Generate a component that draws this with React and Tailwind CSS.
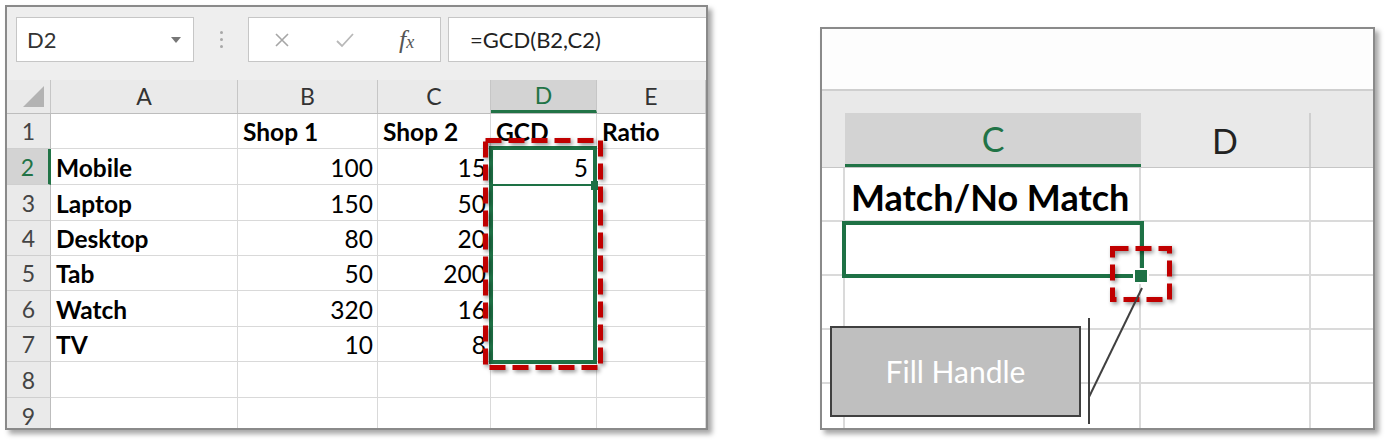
import React from 'react';

const leftCols = [
  { key: 'A', w: 'w-[187px]' },
  { key: 'B', w: 'w-[140px]' },
  { key: 'C', w: 'w-[113px]' },
  { key: 'D', w: 'w-[106px]' },
  { key: 'E', w: 'flex-1' },
];

const rowHeights = ['h-[35px]', 'h-[36px]', 'h-[36px]', 'h-[35px]', 'h-[35px]', 'h-[36px]', 'h-[35px]', 'h-[36px]', 'h-[36px]'];

const data = [
  ['', 'Shop 1', 'Shop 2', 'GCD', 'Ratio'],
  ['Mobile', '100', '15', '5', ''],
  ['Laptop', '150', '50', '', ''],
  ['Desktop', '80', '20', '', ''],
  ['Tab', '50', '200', '', ''],
  ['Watch', '320', '16', '', ''],
  ['TV', '10', '8', '', ''],
  ['', '', '', '', ''],
  ['', '', '', '', ''],
];

function DashedBox({ w, h, className }) {
  return (
    <svg
      width={w}
      height={h}
      className={'absolute drop-shadow-[2px_2px_2px_rgba(0,0,0,0.45)] ' + className}
    >
      <rect x="2.5" y="2.5" width={w - 5} height={h - 5} fill="none" stroke="#c00000" strokeWidth="5" strokeDasharray="16 7" />
    </svg>
  );
}

function Toolbar() {
  return (
    <div className="h-[73px] bg-[#eeeeee] flex items-start pt-[10px] pl-[9px]">
      <div className="w-[178px] h-[45px] bg-white border border-[#c6c6c6] flex items-center justify-between pl-[10px] pr-[12px]">
        <span className="text-[22px] text-[#333]">D2</span>
        <svg width="10" height="6" viewBox="0 0 10 6">
          <polygon points="0,0 10,0 5,6" fill="#777" />
        </svg>
      </div>
      <div className="w-[54px] h-[45px] flex flex-col items-center justify-center gap-[4px]">
        <div className="w-[3px] h-[3px] rounded-full bg-[#a8a8a8]" />
        <div className="w-[3px] h-[3px] rounded-full bg-[#a8a8a8]" />
        <div className="w-[3px] h-[3px] rounded-full bg-[#a8a8a8]" />
      </div>
      <div className="w-[193px] h-[45px] bg-white border border-[#c6c6c6] flex items-center">
        <div className="w-[68px] flex justify-center">
          <svg width="16" height="16" viewBox="0 0 16 16">
            <path d="M2 2 L14 14 M14 2 L2 14" stroke="#a6a6a6" strokeWidth="1.6" />
          </svg>
        </div>
        <div className="w-[58px] flex justify-center">
          <svg width="20" height="16" viewBox="0 0 20 16">
            <path d="M2 9 L7 14 L18 2" stroke="#b8b8b8" strokeWidth="1.8" fill="none" />
          </svg>
        </div>
        <div className="w-[68px] flex justify-center">
          <span className="font-['Liberation_Serif',serif] italic text-[26px] text-[#555] leading-none">
            f<span className="text-[18px]">x</span>
          </span>
        </div>
      </div>
      <div className="flex-1 h-[45px] ml-[7px] bg-white border border-r-0 border-[#c6c6c6] flex items-center pl-[21px]">
        <span className="text-[22px] text-[#222]">=GCD(B2,C2)</span>
      </div>
    </div>
  );
}

function LeftSheet() {
  return (
    <div className="relative w-[703px] h-[425px] border-2 border-[#8a8a8a] bg-white shadow-[4px_4px_5px_rgba(0,0,0,0.35)] overflow-hidden">
      <Toolbar />
      <div className="h-[34px] flex bg-[#eaeaea] border-b border-[#bdbdbd]">
        <div className="w-[44px] border-r border-[#c6c6c6] flex items-end justify-end pr-[6px] pb-[6px]">
          <svg width="21" height="21" viewBox="0 0 21 21">
            <polygon points="21,0 21,21 0,21" fill="#b3b3b3" />
          </svg>
        </div>
        {leftCols.map((c) => (
          <div
            key={c.key}
            className={
              c.w +
              ' flex items-center justify-center text-[23px] border-r border-[#c6c6c6] ' +
              (c.key === 'D' ? 'bg-[#d3d3d3] text-[#217346] border-b-[3px] border-b-[#217346]' : 'text-[#333]')
            }
          >
            {c.key}
          </div>
        ))}
      </div>
      {data.map((row, i) => (
        <div key={i} className={rowHeights[i] + ' flex'}>
          <div
            className={
              'w-[44px] flex items-end justify-center pb-[5px] leading-none text-[23px] border-b border-[#cfcfcf] ' +
              (i === 1
                ? 'bg-[#d3d3d3] text-[#217346] border-r-[3px] border-r-[#217346]'
                : 'bg-[#eaeaea] text-[#444] border-r border-r-[#bdbdbd]')
            }
          >
            {i + 1}
          </div>
          {row.map((v, j) => {
            const right = i > 0 && j > 0;
            return (
              <div
                key={j}
                className={
                  leftCols[j].w +
                  ' flex items-end pb-[4px] leading-none text-[24.5px] text-black border-r border-b border-[#d9d9d9] ' +
                  (right ? 'justify-end pr-[4px] font-normal' : 'justify-start pl-[5px] font-bold') +
                  (i === 1 && j === 3 ? ' pr-[8px]' : '')
                }
              >
                {v}
              </div>
            );
          })}
        </div>
      ))}

      <div className="absolute left-[482px] top-[139px] w-[108px] h-[218px] border-4 border-[#1e7145]" />
      <div className="absolute left-[482px] top-[177px] w-[104px] h-[2px] bg-[#1e7145]" />
      <div className="absolute left-[584px] top-[174px] w-[7px] h-[9px] bg-[#1e7145]" />
      <DashedBox w={120} h={232} className="left-[476px] top-[131px]" />
    </div>
  );
}

function RightSheet() {
  const rows = ['Match/No Match', '', '', '', ''];
  return (
    <div className="relative w-[555px] h-[403px] border-2 border-[#8a8a8a] bg-white shadow-[4px_4px_5px_rgba(0,0,0,0.35)] overflow-hidden">
      <div className="h-[60px] bg-[#fdfdfd]" />
      <div className="h-[79px] bg-[#e9e9e9] border-t-2 border-[#cfcfcf] border-b border-b-[#c6c6c6] flex flex-col">
        <div className="h-[27px]" />
        <div className="flex-1 flex">
          <div className="w-[23px]" />
          <div className="w-[296px] bg-[#d3d3d3] border-b-[3px] border-[#217346] flex items-center justify-center text-[34px] text-[#217346]">
            C
          </div>
          <div className="w-[170px] border-r-2 border-[#cfcfcf] flex items-center justify-center text-[34px] text-[#222]">
            D
          </div>
          <div className="flex-1" />
        </div>
      </div>
      {rows.map((v, i) => (
        <div key={i} className="h-[54px] flex border-b-2 border-[#dadada]">
          <div className="w-[23px] border-r-2 border-[#dadada]" />
          <div className="w-[296px] border-r-2 border-[#dadada] flex items-end pb-[5px] pl-[6px] text-[36px] font-bold text-black leading-none">
            {v}
          </div>
          <div className="w-[170px] border-r-2 border-[#dadada]" />
          <div className="flex-1" />
        </div>
      ))}

      <div className="absolute left-[20px] top-[192px] w-[302px] h-[57px] border-4 border-[#1e7145]" />
      <div className="absolute left-[311px] top-[239px] w-[16px] h-[16px] bg-[#1e7145] border-2 border-white" />
      <DashedBox w={62} h={56} className="left-[288px] top-[217px]" />
      <div className="absolute left-[8px] top-[297px] w-[251px] h-[91px] bg-[#bfbfbf] border-2 border-[#404040] flex items-center justify-center text-[30px] text-white">
        Fill Handle
      </div>
      <svg className="absolute left-0 top-0" width="551" height="399">
        <line x1="320" y1="259" x2="267" y2="368" stroke="#404040" strokeWidth="2" />
        <line x1="267" y1="289" x2="267" y2="395" stroke="#404040" strokeWidth="2" />
      </svg>
    </div>
  );
}

export default function App() {
  return (
    <div className="w-[1388px] h-[444px] bg-white flex items-start font-['Lato',sans-serif] overflow-hidden">
      <div className="ml-[5px] mt-[5px]">
        <LeftSheet />
      </div>
      <div className="ml-[112px] mt-[27px]">
        <RightSheet />
      </div>
    </div>
  );
}
